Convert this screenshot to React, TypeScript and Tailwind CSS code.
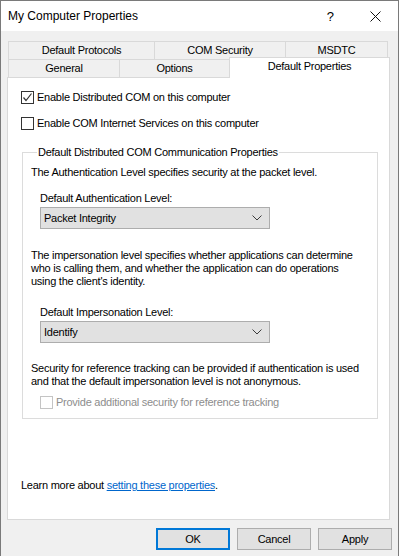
import React from "react";

const tabBase =
  "flex items-center justify-center border-l border-t border-[#d9d9d9] text-[11px] text-black";

function Chevron() {
  return (
    <svg width="10" height="6" viewBox="0 0 10 6" className="mr-[7px]">
      <path d="M0.5 0.5 L5 5 L9.5 0.5" fill="none" stroke="#3c3c3c" strokeWidth="1" />
    </svg>
  );
}

function Check() {
  return (
    <svg width="11" height="11" viewBox="0 0 11 11">
      <path d="M1.5 5.5 L4 8.5 L9.5 1.5" fill="none" stroke="#333" strokeWidth="1.2" />
    </svg>
  );
}

interface CheckRowProps {
  label: string;
  checked?: boolean;
  disabled?: boolean;
}

const CheckRow: React.FC<CheckRowProps> = ({ label, checked, disabled }) => {
  return (
    <div className="flex items-center gap-[3px] h-[13px]">
      <div
        className={`w-[13px] h-[13px] border bg-white flex items-center justify-center ${
          disabled ? "border-[#c4c4c4]" : "border-[#333333]"
        }`}
      >
        {checked ? <Check /> : null}
      </div>
      <span className={disabled ? "text-[#8d8d8d]" : "text-black"}>{label}</span>
    </div>
  );
};

function Select({ value }: { value: string }) {
  return (
    <div className="w-[230px] h-[22px] bg-[#e1e1e1] border border-[#adadad] flex items-center justify-between pl-[3px]">
      <span>{value}</span>
      <Chevron />
    </div>
  );
}

interface ButtonProps {
  label: string;
  primary?: boolean;
}

const Button: React.FC<ButtonProps> = ({ label, primary }) => {
  return (
    <div
      className={`w-[74px] h-[22px] bg-[#e1e1e1] flex items-center justify-center ${
        primary ? "border-2 border-[#0078d7]" : "border border-[#adadad]"
      }`}
    >
      {label}
    </div>
  );
};

export default function App() {
  return (
    <div className="w-[399px] h-[556px] bg-[#f0f0f0] border-t border-x border-[#7a7a7a] flex flex-col font-['Liberation_Sans',Arial,sans-serif] text-[11px] leading-[13px] tracking-[-0.25px] text-black overflow-hidden">
      {/* title bar */}
      <div className="h-[30px] bg-white flex items-center pl-[7px] shrink-0 tracking-normal">
        <span className="text-[12px]">My Computer Properties</span>
        <span className="ml-auto text-[13px] mr-[36px]">?</span>
        <svg width="11" height="11" viewBox="0 0 11 11" className="mr-[17px]">
          <path d="M0.5 0.5 L10.5 10.5 M10.5 0.5 L0.5 10.5" stroke="#111" strokeWidth="1" />
        </svg>
      </div>

      <div className="pt-[10px] pl-[6px] flex flex-col">
        {/* tabs */}
        <div className="ml-[1px] flex h-[18px]">
          <div className={`${tabBase} w-[146px]`}>Default Protocols</div>
          <div className={`${tabBase} w-[131px]`}>COM Security</div>
          <div className={`${tabBase} w-[103px] border-r`}>MSDTC</div>
        </div>
        <div className="ml-[1px] flex h-[18px] items-start">
          <div className={`${tabBase} w-[111px] h-[18px]`}>General</div>
          <div className={`${tabBase} w-[110px] h-[18px]`}>Options</div>
          <div
            className={`${tabBase} w-[161px] h-[21px] -mt-[2px] border-r bg-white relative z-10 pb-[3px]`}
          >
            Default Properties
          </div>
        </div>

        {/* panel */}
        <div className="w-[383px] h-[443px] border border-[#d9d9d9] bg-white flex flex-col">
          <div className="pl-[13px] pt-[13px] flex flex-col gap-[13px]">
            <CheckRow label="Enable Distributed COM on this computer" checked />
            <CheckRow label="Enable COM Internet Services on this computer" />
          </div>

          <fieldset className="ml-[14px] mt-[16px] w-[356px] border border-[#dcdcdc] pl-[8px] pb-[9px]">
            <legend className="ml-[6px] px-[1px] leading-[13px]">
              Default Distributed COM Communication Properties
            </legend>
            <p className="mt-[7px]">The Authentication Level specifies security at the packet level.</p>
            <div className="pl-[9px] mt-[13px]">
              <p>Default Authentication Level:</p>
              <div className="mt-[2px]">
                <Select value="Packet Integrity" />
              </div>
            </div>
            <p className="mt-[20px] pr-[14px]">
              The impersonation level specifies whether applications can determine who is calling
              them, and whether the application can do operations using the client's identity.
            </p>
            <div className="pl-[9px] mt-[18px]">
              <p>Default Impersonation Level:</p>
              <div className="mt-[2px]">
                <Select value="Identify" />
              </div>
            </div>
            <p className="mt-[19px] pr-[4px]">
              Security for reference tracking can be provided if authentication is used and that the
              default impersonation level is not anonymous.
            </p>
            <div className="pl-[9px] mt-[8px]">
              <CheckRow label="Provide additional security for reference tracking" disabled />
            </div>
          </fieldset>

          <p className="mt-auto mb-[27px] pl-[13px]">
            Learn more about{" "}
            <a href="#" className="text-[#0066cc] underline">
              setting these properties
            </a>
            .
          </p>
        </div>

        {/* buttons */}
        <div className="mt-[8px] flex justify-end gap-[7px] pr-[6px]">
          <Button label="OK" primary />
          <Button label="Cancel" />
          <Button label="Apply" />
        </div>
      </div>
    </div>
  );
}
